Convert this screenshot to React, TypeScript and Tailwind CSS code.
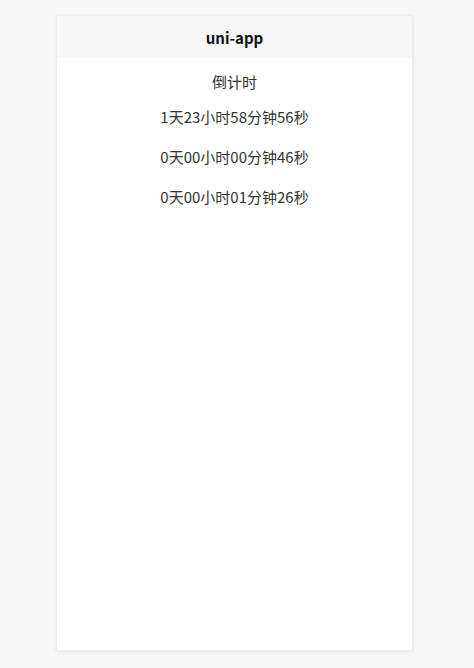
export default function App() {
  const lines = ["1天23小时58分钟56秒", "0天00小时00分钟46秒", "0天00小时01分钟26秒"];
  return (
    <div className="w-[474px] h-[668px] bg-[#f7f7f7] pt-[15px] pl-[56px]" style={{ fontFamily: '"Noto Sans CJK SC", "Noto Sans", sans-serif' }}>
      <div className="w-[357px] h-[636px] bg-white shadow-[0_1px_4px_rgba(0,0,0,0.08)] border border-[#ececec] flex flex-col">
        <div className="h-[42px] bg-[#f7f7f7] flex items-center justify-center">
          <span className="text-[15px] font-bold text-[#111] leading-none">uni-app</span>
        </div>
        <div className="flex flex-col items-center text-[15px] text-[#333] pt-[12px]">
          <div className="h-[24px] leading-[24px]">倒计时</div>
          <div className="mt-[11px] flex flex-col gap-[16px]">
            {lines.map((l) => (
              <div key={l} className="h-[24px] leading-[24px] text-center">{l}</div>
            ))}
          </div>
        </div>
      </div>
    </div>
  );
}
